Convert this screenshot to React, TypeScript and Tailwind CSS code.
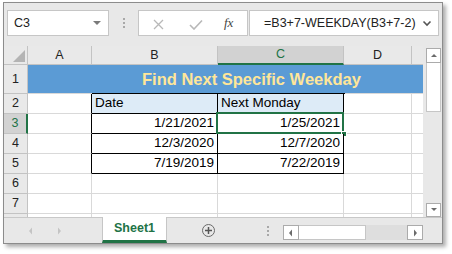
import React from "react";

const GRID = "border-[#d9d9d9]";
const HEAD_LINE = "border-[#c3c3c3]";

function RowHead({ n, h, active }: { n?: number; h: string; active?: boolean }) {
  return (
    <div
      className={`w-[24px] shrink-0 ${h} flex items-center justify-center text-[12.5px] border-b ${HEAD_LINE} ${
        active
          ? "bg-[#d2d2d2] text-[#217346] border-r-2 border-r-[#217346]"
          : "bg-[#e9e9e9] text-[#222] border-r border-r-[#c3c3c3]"
      }`}
    >
      {n}
    </div>
  );
}

function ColHead({ label, w, active, last }: { label: string; w: string; active?: boolean; last?: boolean }) {
  return (
    <div
      className={`${w} shrink-0 h-[19px] flex items-center justify-center text-[12.5px] ${
        last ? "" : `border-r ${HEAD_LINE}`
      } ${
        active
          ? "bg-[#d2d2d2] text-[#217346] border-b-2 border-b-[#217346]"
          : "bg-[#e9e9e9] text-[#222] border-b border-b-[#c3c3c3]"
      }`}
    >
      {label}
    </div>
  );
}

function DataRow({
  n,
  b,
  c,
  head,
  active,
}: {
  n: number;
  b: string;
  c: string;
  head?: boolean;
  active?: boolean;
}) {
  const fill = head ? "bg-[#ddebf7] justify-start pl-[3px]" : "bg-white justify-end pr-[3px]";
  return (
    <div className="flex h-[20px]">
      <RowHead n={n} h="h-[20px]" active={active} />
      <div className={`w-[64px] shrink-0 border-b ${GRID} border-r border-r-black`} />
      <div className={`w-[126px] shrink-0 flex items-center ${fill} border-r border-b border-black`}>{b}</div>
      <div className={`relative w-[126px] shrink-0 flex items-center ${fill} border-r border-b border-black`}>
        {c}
        {active && (
          <>
            <div className="absolute -left-[2px] -top-[2px] -right-[1px] -bottom-[1px] border-2 border-[#217346]" />
            <div className="absolute -right-[4px] -bottom-[4px] w-[6px] h-[6px] bg-[#217346] border border-white" />
          </>
        )}
      </div>
      <div className={`w-[68px] shrink-0 border-r border-b ${GRID}`} />
      <div className={`w-[11px] shrink-0 border-b ${GRID}`} />
    </div>
  );
}

function EmptyRow({ n }: { n: number }) {
  return (
    <div className="flex h-[20px]">
      <RowHead n={n} h="h-[20px]" />
      <div className={`w-[64px] shrink-0 border-r border-b ${GRID}`} />
      <div className={`w-[126px] shrink-0 border-r border-b ${GRID}`} />
      <div className={`w-[126px] shrink-0 border-r border-b ${GRID}`} />
      <div className={`w-[68px] shrink-0 border-r border-b ${GRID}`} />
      <div className={`w-[11px] shrink-0 border-b ${GRID}`} />
    </div>
  );
}

function Tri({ dir, color = "#6b6b6b" }: { dir: "up" | "down" | "left" | "right"; color?: string }) {
  const pts = {
    up: "1,5 4,2 7,5",
    down: "1,2 4,5 7,2",
    left: "5,0.5 2,4 5,7.5",
    right: "3,0.5 6,4 3,7.5",
  }[dir];
  return (
    <svg width="8" height="8" viewBox="0 0 8 8">
      <polygon points={pts} fill={color} />
    </svg>
  );
}

export default function App() {
  return (
    <div className="w-[452px] h-[254px] bg-white pt-[2px] pl-[3px] font-['Liberation_Sans',Arial,sans-serif]">
      <div className="w-[440px] h-[242px] border border-[#8c8c8c] bg-[#e8e8e8] shadow-[3px_3px_4px_rgba(0,0,0,0.32)] flex flex-col">
        {/* formula bar */}
        <div className="h-[43px] shrink-0 flex items-start pt-[7px] pl-[3px]">
          <div className="w-[102px] h-[26px] bg-white border border-[#c6c6c6] flex items-center justify-between pl-[6px] pr-[7px]">
            <span className="text-[12.5px] text-[#222]">C3</span>
            <svg width="8" height="6" viewBox="0 0 8 6">
              <polygon points="0,1 8,1 4,5" fill="#7a7a7a" />
            </svg>
          </div>
          <div className="w-[29px] h-[26px] flex flex-col items-center justify-center gap-[2px]">
            <span className="w-[2px] h-[2px] bg-[#a8a8a8]" />
            <span className="w-[2px] h-[2px] bg-[#a8a8a8]" />
            <span className="w-[2px] h-[2px] bg-[#a8a8a8]" />
          </div>
          <div className="w-[110px] h-[26px] bg-white border border-[#c6c6c6] flex items-center pl-[14px]">
            <svg width="11" height="11" viewBox="0 0 11 11" className="mt-[2px]">
              <path d="M1 1 L10 10 M10 1 L1 10" stroke="#b8b8b8" strokeWidth="1.3" fill="none" />
            </svg>
            <svg width="14" height="11" viewBox="0 0 14 11" className="ml-[25px] mt-[2px]">
              <path d="M1 6 L5 10 L13 1.5" stroke="#b8b8b8" strokeWidth="1.6" fill="none" />
            </svg>
            <span className="ml-[21px] text-[13px] italic text-[#444] font-['Liberation_Serif',serif]">fx</span>
          </div>
          <div className="ml-[1px] w-[190px] h-[26px] bg-white border border-[#c6c6c6] flex items-center pl-[14px] pr-[6px] justify-between">
            <span className="text-[12.5px] text-[#222]">=B3+7-WEEKDAY(B3+7-2)</span>
            <svg width="10" height="7" viewBox="0 0 10 7">
              <path d="M1.5 1.5 L5 5 L8.5 1.5" stroke="#555" strokeWidth="1.6" fill="none" />
            </svg>
          </div>
        </div>

        {/* sheet area */}
        <div className="flex h-[171px] shrink-0">
          <div className="w-[419px] shrink-0 flex flex-col bg-white">
            <div className="flex">
              <div className={`w-[24px] h-[19px] shrink-0 bg-[#e9e9e9] border-r border-b ${HEAD_LINE} relative`}>
                <svg width="12" height="12" viewBox="0 0 12 12" className="absolute right-[2px] bottom-[2px]">
                  <polygon points="12,0 12,12 0,12" fill="#b4b4b4" />
                </svg>
              </div>
              <ColHead label="A" w="w-[64px]" />
              <ColHead label="B" w="w-[126px]" />
              <ColHead label="C" w="w-[126px]" active />
              <ColHead label="D" w="w-[68px]" />
              <ColHead label="" w="w-[11px]" last />
            </div>
            {/* title row */}
            <div className="flex h-[29px]">
              <RowHead n={1} h="h-[29px]" />
              <div className="flex flex-col w-[395px]">
                <div className="h-[28px] bg-[#5b9bd5] flex items-center pl-[114px] text-[16.5px] font-bold text-[#ffe699]">
                  Find Next Specific Weekday
                </div>
                <div className="flex h-[1px]">
                  <div className="w-[64px] bg-[#d9d9d9]" />
                  <div className="w-[253px] bg-black" />
                  <div className="flex-1 bg-[#d9d9d9]" />
                </div>
              </div>
            </div>
            <div className="text-[13.5px] text-black">
              <DataRow n={2} b="Date" c="Next Monday" head />
              <DataRow n={3} b="1/21/2021" c="1/25/2021" active />
              <DataRow n={4} b="12/3/2020" c="12/7/2020" />
              <DataRow n={5} b="7/19/2019" c="7/22/2019" />
            </div>
            <EmptyRow n={6} />
            <EmptyRow n={7} />
            <div className="flex h-[3px]">
              <div className={`w-[24px] shrink-0 bg-[#e9e9e9] border-r ${HEAD_LINE}`} />
              <div className={`w-[64px] shrink-0 border-r ${GRID}`} />
              <div className={`w-[126px] shrink-0 border-r ${GRID}`} />
              <div className={`w-[126px] shrink-0 border-r ${GRID}`} />
              <div className={`w-[68px] shrink-0 border-r ${GRID}`} />
            </div>
          </div>
          {/* vertical scrollbar */}
          <div className="w-[19px] shrink-0 pl-[3px] pr-[1px] pt-[2px] flex flex-col">
            <div className="h-[15px] bg-white border border-[#ababab] flex items-center justify-center">
              <Tri dir="up" />
            </div>
            <div className="h-[49px] bg-white border border-t-0 border-[#c6c6c6]" />
            <div className="flex-1" />
            <div className="h-[14px] bg-white border border-[#ababab] flex items-center justify-center">
              <Tri dir="down" />
            </div>
          </div>
        </div>

        {/* sheet tabs */}
        <div className="flex-1 flex border-t border-[#c8c8c8]">
          <div className="w-[98px] shrink-0 flex items-center pl-[23px] gap-[20px]">
            <Tri dir="left" color="#c4c4c4" />
            <Tri dir="right" color="#c4c4c4" />
          </div>
          <div className="w-[65px] shrink-0 -mt-[1px] bg-white border-x border-[#c6c6c6] border-b-[3px] border-b-[#217346] flex items-center justify-center text-[12.5px] font-bold text-[#217346]">
            Sheet1
          </div>
          <div className="ml-[35px] flex items-center">
            <div className="w-[13px] h-[13px] rounded-full border border-[#6a6a6a] flex items-center justify-center">
              <svg width="9" height="9" viewBox="0 0 9 9">
                <path d="M4.5 1 V8 M1 4.5 H8" stroke="#555" strokeWidth="1.5" />
              </svg>
            </div>
          </div>
          <div className="ml-[52px] flex flex-col justify-center gap-[2px]">
            <span className="w-[2px] h-[2px] bg-[#a8a8a8]" />
            <span className="w-[2px] h-[2px] bg-[#a8a8a8]" />
            <span className="w-[2px] h-[2px] bg-[#a8a8a8]" />
          </div>
          <div className="ml-[14px] mt-[7px] h-[15px] flex">
            <div className="w-[16px] bg-white border border-[#ababab] flex items-center justify-center">
              <Tri dir="left" />
            </div>
            <div className="w-[67px] bg-white border-y border-r border-[#c6c6c6]" />
            <div className="w-[41px] bg-[#dedede]" />
            <div className="w-[16px] bg-white border border-[#ababab] flex items-center justify-center">
              <Tri dir="right" />
            </div>
          </div>
        </div>
      </div>
    </div>
  );
}
